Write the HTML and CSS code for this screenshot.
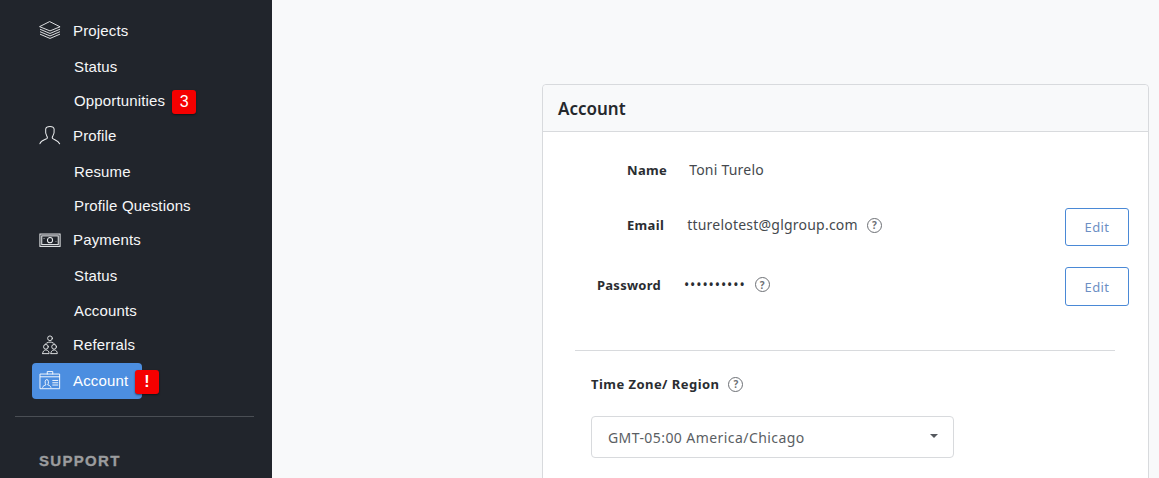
FILE: index.html
```html
<!DOCTYPE html>
<html lang="en">
<head>
<meta charset="utf-8">
<title>Account</title>
<link rel="stylesheet" href="styles.css">
</head>
<body>
<div class="app">
  <aside class="sidebar">
    <nav class="nav">
      <a class="nav-item">
        <svg class="nav-icon" viewBox="0 0 24 20" fill="none" stroke="currentColor" stroke-width="1" stroke-linejoin="round" stroke-linecap="round">
          <path d="M12 1 L23 6.5 L12 11 L1 6.5 Z"/>
          <path d="M1.5 9.3 L12 13.8 L22.5 9.3"/>
          <path d="M1.5 12 L12 16.5 L22.5 12"/>
          <path d="M1.5 14.7 L12 19.2 L22.5 14.7"/>
        </svg>
        <span>Projects</span>
      </a>
      <div class="sub-list">
        <a class="sub-item">Status</a>
        <a class="sub-item">Opportunities<span class="badge badge--inline">3</span></a>
      </div>
      <a class="nav-item">
        <svg class="nav-icon" viewBox="0 0 24 20" fill="none" stroke="currentColor" stroke-width="1.1" stroke-linecap="round" stroke-linejoin="round">
          <path d="M1 19.5 C2 16 5.5 15.5 8.5 14 C9.3 13.5 9.1 12 8.5 11 C7.3 9 7 6 7.3 3.5 C7.7 1.5 9.5 .8 12 .8 C14.5 .8 16.2 1.8 16.5 3.5 C16.8 6 16.3 9 15.1 11 C14.5 12 14.3 13.5 15.1 14 C17.5 15.5 21 16 22.5 19.5"/>
        </svg>
        <span>Profile</span>
      </a>
      <div class="sub-list">
        <a class="sub-item">Resume</a>
        <a class="sub-item">Profile Questions</a>
      </div>
      <a class="nav-item">
        <svg class="nav-icon" viewBox="0 0 24 16" fill="none" stroke="currentColor" stroke-width="1.1">
          <rect x="1" y="1.5" width="22" height="13.5"/>
          <rect x="3" y="3.5" width="18" height="9.5"/>
          <circle cx="12" cy="8.2" r="2.8"/>
          <path d="M5.5 6v.8M18.5 9.5v.8"/>
        </svg>
        <span>Payments</span>
      </a>
      <div class="sub-list">
        <a class="sub-item">Status</a>
        <a class="sub-item">Accounts</a>
      </div>
      <a class="nav-item">
        <svg class="nav-icon" viewBox="0 0 24 22" fill="none" stroke="currentColor" stroke-width="1" stroke-linecap="round">
          <circle cx="12" cy="3.6" r="2.6"/>
          <path d="M9 8.5 C10 7.5 14 7.5 15 8.5"/>
          <path d="M7 10 L8.5 8.5 M17 10 L15.5 8.5"/>
          <circle cx="7.5" cy="13" r="2.6"/>
          <circle cx="16.5" cy="13" r="2.6"/>
          <path d="M4 20.5 C4 18 5 17 7 16.5 M8 16.5 C10 17 11 18 11 20.5 H4 M13 20.5 C13 18 14 17 16 16.5 M17 16.5 C19 17 20 18 20 20.5 H13"/>
        </svg>
        <span>Referrals</span>
      </a>
      <a class="nav-item nav-item--active">
        <svg class="nav-icon" viewBox="0 0 24 20" fill="none" stroke="currentColor" stroke-width="1" stroke-linecap="round">
          <path d="M9 3.5 V.8 H15 V3.5"/>
          <path d="M1.5 3.5 H22.5 V19.5 H1.5 Z"/>
          <path d="M1.5 6.5 H22.5"/>
          <path d="M4 18 C4.5 16 6 16 7.5 15.3 C6.3 13.5 6.3 9.5 8.5 9.5 C10.7 9.5 10.7 13.5 9.5 15.3 C11 16 12.5 16 13 18"/>
          <path d="M15 10.5 H20.5 M15 13 H20.5 M15 15.5 H20.5"/>
        </svg>
        <span>Account</span>
        <span class="badge badge--over">!</span>
      </a>
    </nav>
    <hr class="side-rule">
    <h2 class="side-heading">SUPPORT</h2>
  </aside>
  <main class="main">
    <section class="card">
      <header class="card-header">
        <h1 class="card-title">Account</h1>
      </header>
      <div class="card-body">
        <div class="row row--name">
          <span class="label">Name</span>
          <span class="value">Toni Turelo</span>
        </div>
        <div class="row row--email">
          <span class="label">Email</span>
          <span class="value">tturelotest@glgroup.com</span>
          <span class="help">?</span>
          <button class="edit" type="button">Edit</button>
        </div>
        <div class="row row--password">
          <span class="label">Password</span>
          <span class="value value--dots">••••••••••</span>
          <span class="help">?</span>
          <button class="edit" type="button">Edit</button>
        </div>
        <hr class="card-rule">
        <div class="region">
          <div class="region-label">
            <span class="label">Time Zone/ Region</span>
            <span class="help">?</span>
          </div>
          <div class="select">
            <span>GMT-05:00 America/Chicago</span>
            <span class="caret"></span>
          </div>
        </div>
      </div>
    </section>
  </main>
</div>
</body>
</html>
```

FILE: styles.css
```css
* { box-sizing: border-box; }
html, body { margin: 0; height: 478px; overflow: hidden; }
body { background: #f8f9fa; font-family: "Liberation Sans", Arial, sans-serif; }

.app { display: flex; height: 478px; overflow: hidden; }

.sidebar {
  width: 272px;
  flex: none;
  background: #21252c;
  color: #fff;
  padding: 13.5px 17px 0 15px;
  font-size: 15px;
  letter-spacing: .15px;
}
.nav { display: flex; flex-direction: column; padding: 0 0 0 17px; }
.nav-item {
  position: relative;
  display: flex;
  align-items: center;
  height: 33.6px;
  width: 110px;
  padding-left: 7px;
  border-radius: 4px;
  color: #f6f7f8;
}
.nav-icon { width: 22px; height: 20px; margin-right: 12px; color: #eceef0; flex: none; }
.nav-item--active {
  height: 36px;
  margin-top: 1.5px;
  padding-bottom: 1px;
  background: #4c8ee0;
  color: #fff;
}
.nav-item--active .nav-icon { color: #fff; }
.sub-list { display: flex; flex-direction: column; padding-top: 1.8px; }
.sub-item {
  display: flex;
  align-items: center;
  height: 34.7px;
  padding-left: 42px;
  color: #f6f7f8;
}
.badge {
  display: inline-flex;
  align-items: center;
  justify-content: center;
  width: 24px;
  height: 24px;
  margin-left: 7px;
  background: #f50000;
  border-radius: 3px;
  box-shadow: 0 1px 2px rgba(0,0,0,.5);
  color: #fff;
  font-size: 16px;
}
.badge--inline { margin-top: 2px; }
.badge--over { position: absolute; left: 103px; top: 7px; margin: 0; font-weight: 700; }

.side-rule { margin: 17px 0 0; border: 0; border-top: 1px solid #4a4e54; width: 239px; }
.side-heading {
  margin: 35px 0 0 24px;
  font-size: 15px;
  line-height: 17px;
  font-weight: 700;
  letter-spacing: 1.3px;
  -webkit-text-stroke: .35px #9b9c9e;
  color: #9b9c9e;
}

.main { flex: 1; padding: 84px 10px 0 270px; min-width: 0; overflow: hidden; }
.card {
  background: #fff;
  border: 1px solid #d8dadd;
  border-radius: 4px;
  height: 460px;
  font-family: "Noto Sans", "Open Sans", sans-serif;
  color: #2a2d31;
}
.card-header {
  height: 47px;
  padding: 1px 15px 0;
  display: flex;
  align-items: center;
  background: #f8f9fa;
  border-bottom: 1px solid #d8dadd;
  border-radius: 4px 4px 0 0;
}
.card-title { margin: 0; font-size: 17px; font-weight: 600; color: #25282c; }
.card-body { padding: 19px 19px 0 0; }

.row { display: flex; align-items: center; }
.label { font-size: 13px; font-weight: 700; color: #2a2d31; letter-spacing: .33px; }
.value { font-size: 14px; letter-spacing: .22px; color: #45494e; }
.row--name { height: 38px; padding-left: 84px; }
.row--name .value { margin-left: 22px; transform: translateY(-1px); }
.row--email { margin-top: 19px; height: 38px; padding-left: 84px; }
.row--email .value { margin-left: 23px; }
.row--password { margin-top: 21px; height: 39px; padding-left: 54px; }
.row--password .label { letter-spacing: .25px; }
.row--password .value { margin-left: 23px; }
.row--email .label, .row--email .help { transform: translateY(-2px); }
.row--email .value { transform: translateY(-3px); }
.row--password .label, .row--password .value, .row--password .help { transform: translateY(-2px); }
.value--dots { font-size: 14px; letter-spacing: .9px; color: #2a2d31; }

.help {
  display: inline-flex;
  align-items: center;
  justify-content: center;
  width: 15px;
  height: 15px;
  margin-left: 9px;
  border: 1.5px solid #6d7075;
  border-radius: 50%;
  color: #6d7075;
  font-size: 10px;
  font-weight: 700;
  line-height: 1;
}
.edit {
  width: 64px;
  height: 100%;
  margin-left: auto;
  background: #fff;
  border: 1px solid #4a89d6;
  border-radius: 3px;
  color: #6d8fc4;
  font-family: inherit;
  font-size: 13px;
  letter-spacing: .4px;
  padding: 0;
}

.card-rule { margin: 44px 14px 0 32px; border: 0; border-top: 1px solid #d8dadd; }
.region { padding-left: 48px; }
.region-label { display: flex; align-items: center; margin-top: 24px; height: 18px; }
.region-label .label { letter-spacing: .45px; }
.select {
  display: flex;
  align-items: center;
  justify-content: space-between;
  width: 363px;
  height: 42px;
  margin-top: 23px;
  padding: 0 15px 0 16px;
  background: #fff;
  border: 1px solid #d8dadd;
  border-radius: 4px;
  font-size: 14px;
  letter-spacing: .43px;
  color: #5a5e63;
}
.caret {
  width: 0;
  height: 0;
  margin-bottom: 2px;
  border-left: 4px solid transparent;
  border-right: 4px solid transparent;
  border-top: 4px solid #55595e;
}
```
